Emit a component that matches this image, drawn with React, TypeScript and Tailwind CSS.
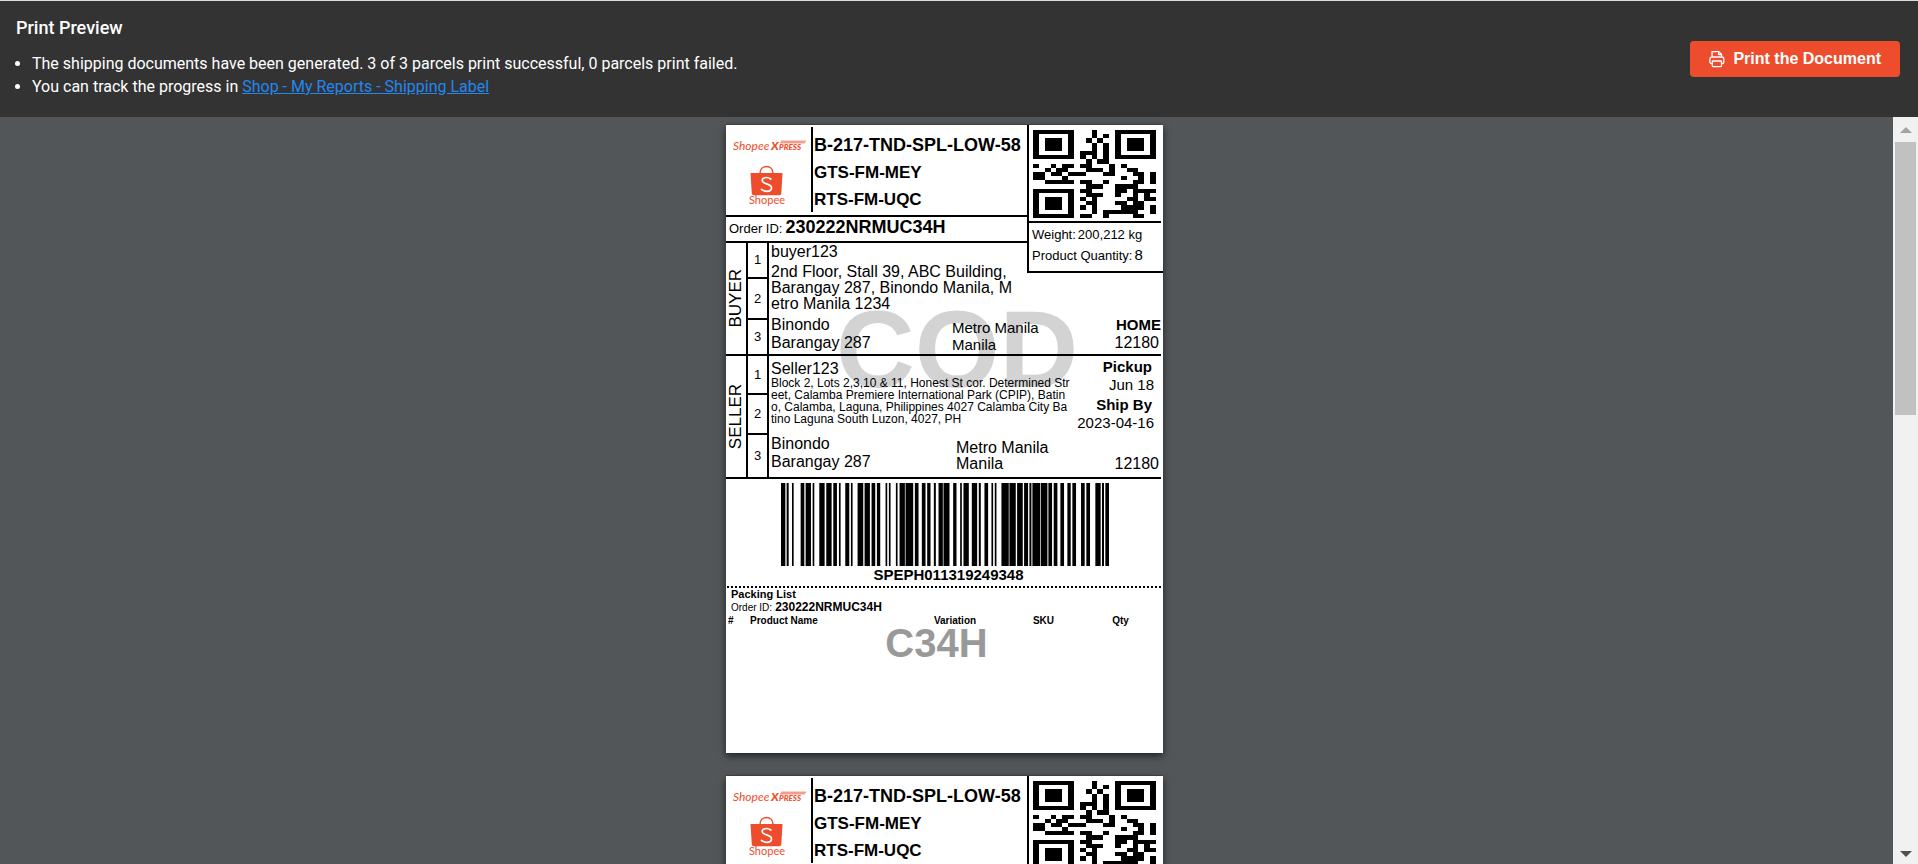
import React from "react";

const QR_ROWS = [
  "#######...#...#######",
  "#.....#...#.#.#.....#",
  "#.###.#..#.#..#.###.#",
  "#.###.#...#.#.#.###.#",
  "#.###.#...#.#.#.###.#",
  "#.....#.###.#.#.....#",
  "#######.#.#.#.#######",
  ".........#.##........",
  "#..#.##.##...#.#.....",
  "..#.##...###.#..##...",
  "##.##.###...##...##.#",
  "##...#.........#..#.#",
  "..#####.##..#....##.#",
  ".........###..####...",
  "#######.##....##.####",
  "#.....#..###..#..#.#.",
  "#.###.#.#.#.....##.##",
  "#.###.#..##...##.##..",
  "#.###.#.#.#....####.#",
  "#.....#...#.######..#",
  "#######.##..#....##..",
];

const BARS: [number, number][] = [
  [211, 224], [228, 234], [244, 249], [270, 281], [285, 301], [306, 311],
  [326, 342], [347, 363], [368, 379], [385, 390], [404, 416], [421, 426],
  [441, 458], [462, 478], [483, 494], [499, 509], [525, 530], [535, 540],
  [556, 561], [567, 583], [585, 608], [613, 624], [634, 645], [650, 660],
  [670, 676], [684, 697], [699, 717], [728, 738], [749, 754], [759, 775],
  [784, 800], [805, 811], [822, 833], [843, 848], [853, 858], [873, 895],
  [897, 916], [920, 937], [941, 953], [957, 963], [966, 989], [991, 1011],
  [1014, 1025], [1030, 1041], [1050, 1061], [1071, 1081], [1086, 1097],
  [1112, 1123], [1128, 1139], [1155, 1171], [1175, 1181], [1185, 1196],
];

const QR_PATH = QR_ROWS.map((row, y) =>
  Array.from(row.matchAll(/#+/g), (run) => `M${run.index} ${y}h${run[0].length}v1h-${run[0].length}z`).join(""),
).join("");

function QrCode() {
  return (
    <svg
      viewBox="0 0 21 21"
      preserveAspectRatio="none"
      shapeRendering="crispEdges"
      className="block h-[88px] w-[123px]"
      role="img"
      aria-label="QR code"
    >
      <path d={QR_PATH} />
    </svg>
  );
}

function Barcode() {
  return (
    <svg
      viewBox="211 0 985 10"
      preserveAspectRatio="none"
      className="mx-auto block h-[83px] w-[328px]"
      role="img"
      aria-label="Tracking barcode"
    >
      {BARS.map(([from, to]) => (
        <rect key={from} x={from} y={0} width={to - from} height={10} />
      ))}
    </svg>
  );
}

function Logos() {
  return (
    <div className="flex w-[85px] flex-col items-center text-[#ee4d2d]">
      <svg viewBox="0 0 76 14" className="mt-3.5 h-3.5 w-[76px]" role="img" aria-label="Shopee Xpress">
        <g fill="currentColor" fontStyle="italic">
          <text x="2" y="10.5" fontSize="12" fontFamily="Lato, sans-serif">Shopee</text>
          <text x="40" y="10.5" fontSize="12" fontWeight="900" fontFamily="Lato, sans-serif">X</text>
          <text x="48" y="10.5" fontSize="8" fontWeight="900" fontFamily="Lato, sans-serif">PRESS</text>
        </g>
        <path d="M50 2.2h25M49 3.8h25" stroke="currentColor" strokeWidth=".8" />
      </svg>
      <svg viewBox="0 0 36 44" className="mt-3 mr-[3px] h-11 w-9" role="img" aria-label="Shopee">
        <path d="M11 8.500C11 4 14 1.500 17.500 1.500S24 4 24 8.500" fill="none" stroke="currentColor" strokeWidth="1.5" />
        <path d="M1.500 8h32l-1.200 20.500a2 2 0 0 1-2 1.700H4.800a2 2 0 0 1-2-1.700z" fill="currentColor" />
        <path
          d="M21.800 14c-1.300-1-2.700-1.500-4.300-1.500-2.500 0-4.300 1.200-4.300 3 0 4.200 9.300 2.500 9.300 7.200 0 2.200-2 3.600-4.700 3.600-2 0-3.900-.7-5.300-2"
          fill="none"
          stroke="#fff"
          strokeWidth="1.7"
          strokeLinecap="round"
        />
        <text x="0" y="39" fontSize="11" fill="currentColor" fontFamily="Lato, sans-serif">Shopee</text>
      </svg>
    </div>
  );
}

function PartyFrame({
  title,
  rows,
  size,
  children,
}: {
  title: string;
  rows: string;
  size: string;
  children: React.ReactNode;
}) {
  return (
    <section className={`mr-0.5 flex border-b-2 border-black ${size}`}>
      <div className="flex w-[22px] items-center justify-center border-r-2 border-black">
        <h3 className="rotate-180 text-[17px] leading-[18px] [writing-mode:vertical-rl]">{title}</h3>
      </div>
      <div className={`grid w-[21px] border-r-2 border-black text-[13px] leading-4 ${rows}`}>
        <span className="flex items-center justify-center border-b-2 border-black">1</span>
        <span className="flex items-center justify-center border-b-2 border-black">2</span>
        <span className="flex items-center justify-center">3</span>
      </div>
      <div className="flex-1 pl-0.5 text-base whitespace-nowrap">{children}</div>
    </section>
  );
}

function Label() {
  return (
    <article className="h-[628px] w-[437px] shrink-0 bg-white font-['Liberation_Sans',Arial,sans-serif] text-black shadow-[0_-1px_0_#3d3f40,0_3px_7px_rgba(0,0,0,0.6)]">
      <div className="relative isolate">
        <span className="absolute top-[186px] left-[110px] -z-10 text-[109px] leading-[76px] font-bold text-[#d3d3d3]">
          COD
        </span>
        <div className="flex items-start">
          <div className="w-[301px]">
            <div className="flex h-[92px] border-b-2 border-black">
              <Logos />
              <div className="mt-0.5 mb-[3px] border-l-2 border-black" />
              <div className="pt-[7px] pl-px text-[17px] leading-[27px] font-bold whitespace-nowrap">
                <p className="text-lg leading-[27px]">B-217-TND-SPL-LOW-58</p>
                <p>GTS-FM-MEY</p>
                <p>RTS-FM-UQC</p>
              </div>
            </div>
            <div className="flex h-[26px] items-baseline gap-[3px] border-b-2 border-black pl-[3px]">
              <span className="text-[13px]">Order ID:</span>
              <span className="text-lg leading-[21px] font-bold">230222NRMUC34H</span>
            </div>
          </div>
          <div className="-mb-[30px] h-[148px] flex-1 border-b-2 border-l-2 border-black">
            <div className="mr-0.5 border-b-2 border-black pt-[5px] pb-[3px] pl-1">
              <QrCode />
            </div>
            <div className="pt-0.5 pl-[3px] text-[13px] leading-5 whitespace-nowrap">
              <p className="flex gap-0.5">
                <span>Weight:</span>
                <span>200,212 kg</span>
              </p>
              <p className="flex items-baseline gap-0.5">
                <span>Product Quantity:</span>
                <span className="text-[15px]">8</span>
              </p>
            </div>
          </div>
        </div>

        <PartyFrame title="BUYER" size="h-[113px]" rows="grid-rows-[36px_41px_1fr]">
          <p className="leading-[18px]">buyer123</p>
          <div className="mt-[3px] leading-4">
            <p>2nd Floor, Stall 39, ABC Building,</p>
            <p>Barangay 287, Binondo Manila, M</p>
            <p>etro Manila 1234</p>
          </div>
          <div className="mt-1 grid grid-cols-[181px_1fr_auto] leading-[18px]">
            <div>
              <p>Binondo</p>
              <p>Barangay 287</p>
            </div>
            <div className="pt-[3px] text-[15px] leading-[17px]">
              <p>Metro Manila</p>
              <p>Manila</p>
            </div>
            <div className="text-right">
              <p className="text-[15px] leading-[18px] font-bold">HOME</p>
              <p className="pr-0.5">12180</p>
            </div>
          </div>
        </PartyFrame>

        <PartyFrame title="SELLER" size="h-[123px]" rows="grid-rows-[39px_40px_1fr]">
          <div className="flex justify-between">
            <div className="pt-1">
              <p className="leading-[17px]">Seller123</p>
              <div className="text-xs leading-3">
                <p>Block 2, Lots 2,3,10 &amp; 11, Honest St cor. Determined Str</p>
                <p>eet, Calamba Premiere International Park (CPIP), Batin</p>
                <p>o, Calamba, Laguna, Philippines 4027 Calamba City Ba</p>
                <p>tino Laguna South Luzon, 4027, PH</p>
              </div>
            </div>
            <div className="pt-0.5 pr-[7px] text-right text-[15px] leading-[18px]">
              <p className="pr-0.5 font-bold">Pickup</p>
              <p>Jun 18</p>
              <p className="mt-0.5 pr-0.5 font-bold">Ship By</p>
              <p>2023-04-16</p>
            </div>
          </div>
          <div className="mt-[3px] grid grid-cols-[185px_1fr_auto] leading-[18px]">
            <div>
              <p>Binondo</p>
              <p>Barangay 287</p>
            </div>
            <div className="pt-[5px] leading-4">
              <p>Metro Manila</p>
              <p>Manila</p>
            </div>
            <p className="self-end pr-0.5 leading-4">12180</p>
          </div>
        </PartyFrame>
      </div>

      <div className="pt-1 text-center">
        <Barcode />
        <p className="pl-2 text-[15px] leading-[17px] font-bold">SPEPH011319249348</p>
      </div>

      <section className="mt-[3px] mr-0.5 ml-px border-t-2 border-dotted border-black">
        <h3 className="pl-1 text-[11px] leading-3 font-bold">Packing List</h3>
        <p className="flex items-baseline gap-[3px] pl-1 text-xs leading-[14px] font-bold">
          <span className="text-[10px] font-normal">Order ID:</span>
          <span>230222NRMUC34H</span>
        </p>
        <table className="w-full table-fixed text-[10px] leading-[11px] font-bold">
          <thead>
            <tr>
              <th className="w-[23px] pl-px text-left">#</th>
              <th className="text-left">Product Name</th>
              <th className="w-[88px]">Variation</th>
              <th className="w-[89px]">SKU</th>
              <th className="w-[73px] pr-2">Qty</th>
            </tr>
          </thead>
        </table>
      </section>
      <p className="pr-4 text-center text-[40px] leading-[34px] font-bold text-[#999]">C34H</p>
    </article>
  );
}

function PrinterIcon() {
  return (
    <svg viewBox="0 0 16 18" className="h-[18px] w-4" fill="none" stroke="currentColor" strokeWidth="1.3" strokeLinejoin="round" aria-hidden="true">
      <path d="M3 6.800V1.700h6.800L12.500 4.300v2.500" />
      <path d="M9.600 1.700v2.800h2.900" />
      <path d="M3.300 13.500H2.200a1.300 1.300 0 0 1-1.300-1.300V9a2 2 0 0 1 2-2h9.900a2 2 0 0 1 2 2v3.200a1.300 1.300 0 0 1-1.300 1.300h-1.100" />
      <rect x="3.3" y="11" width="9.2" height="5.6" rx=".8" />
    </svg>
  );
}

function Scrollbar() {
  return (
    <div className="flex w-[25px] shrink-0 flex-col items-center justify-between bg-[#f1f1f1]" aria-hidden="true">
      <div className="flex flex-col items-center">
        <span className="flex h-[25px] items-center">
          <svg viewBox="0 0 12 6" className="h-1.5 w-3 fill-[#a3a3a3]">
            <path d="M0 6 6 0l6 6z" />
          </svg>
        </span>
        <span className="h-[273px] w-[21px] bg-[#c1c1c1]" />
      </div>
      <span className="flex h-5 items-center">
        <svg viewBox="0 0 12 6" className="h-1.5 w-3 fill-[#505050]">
          <path d="m0 0 6 6 6-6z" />
        </svg>
      </span>
    </div>
  );
}

export default function App() {
  return (
    <div className="flex h-screen flex-col overflow-hidden bg-[#525659]">
      <header className="flex h-[117px] shrink-0 items-start justify-between border-t border-[#dadfdc] bg-[#333] pr-[18px] pl-4 font-[Roboto,sans-serif] text-white">
        <div className="pt-[15px]">
          <h1 className="text-lg leading-6 font-medium">Print Preview</h1>
          <ul className="mt-3 list-disc pl-4 text-base leading-[23px]">
            <li>The shipping documents have been generated. 3 of 3 parcels print successful, 0 parcels print failed.</li>
            <li>
              You can track the progress in{" "}
              <a href="#reports" className="text-[#2387f0] underline">
                Shop - My Reports - Shipping Label
              </a>
            </li>
          </ul>
        </div>
        <button
          type="button"
          className="mt-10 flex h-9 items-center gap-2 rounded bg-[#ee4d2d] px-[19px] font-['Liberation_Sans',Arial,sans-serif] text-base font-bold whitespace-nowrap text-white"
        >
          <PrinterIcon />
          Print the Document
        </button>
      </header>
      <div className="flex min-h-0 flex-1">
        <main className="flex flex-1 flex-col items-center gap-[23px] overflow-hidden pt-2 pr-1">
          <Label />
          <Label />
        </main>
        <Scrollbar />
      </div>
    </div>
  );
}
